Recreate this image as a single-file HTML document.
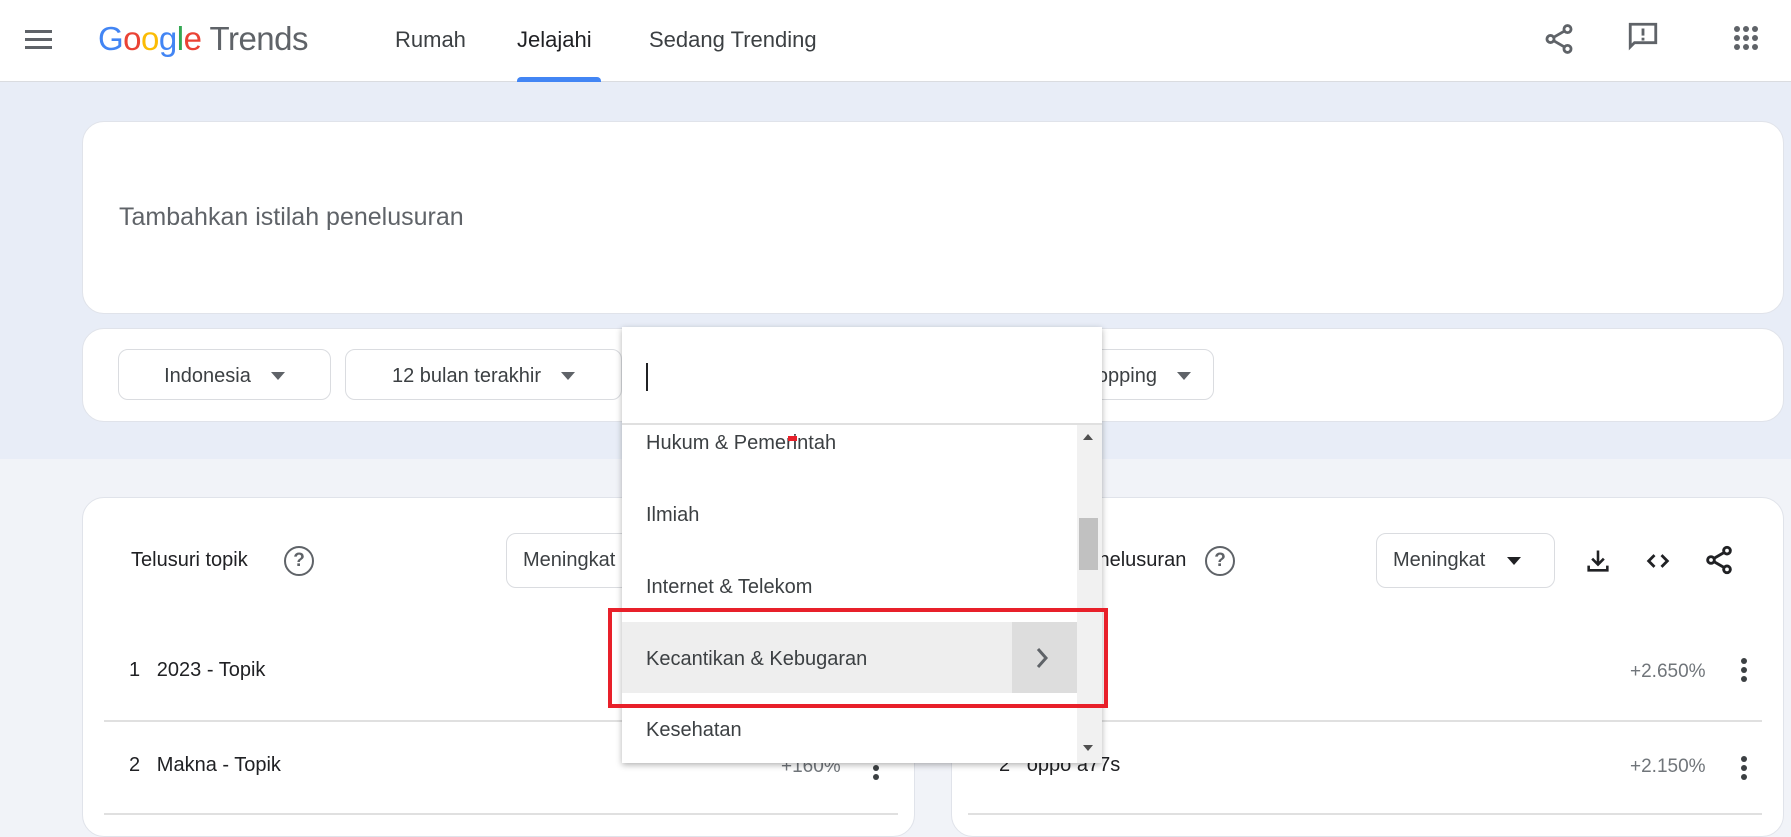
<!DOCTYPE html>
<html><head><meta charset="utf-8"><style>
*{box-sizing:border-box;margin:0;padding:0}
body{width:1791px;height:815px;overflow:hidden;background:#f1f3f8;font-family:"Liberation Sans",Arial,sans-serif;position:relative;color:#202124}
.abs{position:absolute}
.hdr{left:0;top:0;width:1791px;height:82px;background:#fff;border-bottom:1px solid #dadce0}
.band{left:0;top:82px;width:1791px;height:377px;background:#e8edf7}
.card{background:#fff;border-radius:22px;border:1px solid #e0e3ea}
.nav{top:27px;font-size:22px;color:#3c4043}
.btn{border:1px solid #dadce0;border-radius:10px;background:#fff;font-size:20px;color:#3c4043;display:flex;align-items:center;justify-content:center}
.tri{display:inline-block;width:0;height:0;border-left:7px solid transparent;border-right:7px solid transparent;border-top:8px solid #5f6368;margin-left:20px}
.item{left:646px;font-size:20px;color:#3c4043}
.row{font-size:20px;color:#202124}
.pct{font-size:19px;color:#70757a}
.dots{width:6px}
.dots i{display:block;width:6px;height:6px;border-radius:3px;background:#3c4043;margin-bottom:3px}
.div{height:2px;background:#e0e0e0}
</style></head><body>
<div class="abs hdr"></div>
<div class="abs" style="left:25px;top:30px;width:27px">
<div style="height:3px;background:#5f6368;margin-bottom:5px"></div><div style="height:3px;background:#5f6368;margin-bottom:5px"></div><div style="height:3px;background:#5f6368"></div></div>
<div class="abs" style="left:98px;top:20px;font-size:33px;letter-spacing:-0.5px"><span style="color:#4285f4">G</span><span style="color:#ea4335">o</span><span style="color:#fbbc05">o</span><span style="color:#4285f4">g</span><span style="color:#34a853">l</span><span style="color:#ea4335">e</span> <span style="color:#5f6368">Trends</span></div>
<div class="abs nav" style="left:395px">Rumah</div>
<div class="abs nav" style="left:517px;color:#202124">Jelajahi</div>
<div class="abs nav" style="left:649px">Sedang Trending</div>
<div class="abs" style="left:517px;top:77px;width:84px;height:5px;background:#4285f4;border-radius:4px 4px 0 0"></div>
<svg class="abs" style="left:1542px;top:22px" width="34" height="34" viewBox="0 0 24 24" fill="none" stroke="#5f6368" stroke-width="2"><circle cx="18" cy="5" r="2.5"/><circle cx="6" cy="12" r="2.5"/><circle cx="18" cy="19" r="2.5"/><path d="M8.2 10.8l7.6-4.4M8.2 13.2l7.6 4.4"/></svg>
<svg class="abs" style="left:1626px;top:20px" width="34" height="34" viewBox="0 0 24 24"><path d="M3 3h18v13H6l-3 3z" fill="none" stroke="#5f6368" stroke-width="2"/><rect x="11" y="6" width="2" height="5" fill="#5f6368"/><rect x="11" y="12.5" width="2" height="2" fill="#5f6368"/></svg>
<svg class="abs" style="left:1733px;top:25px" width="26" height="26" viewBox="0 0 26 26" fill="#5f6368"><circle cx="4" cy="4" r="3"/><circle cx="13" cy="4" r="3"/><circle cx="22" cy="4" r="3"/><circle cx="4" cy="13" r="3"/><circle cx="13" cy="13" r="3"/><circle cx="22" cy="13" r="3"/><circle cx="4" cy="22" r="3"/><circle cx="13" cy="22" r="3"/><circle cx="22" cy="22" r="3"/></svg>
<div class="abs band"></div>
<div class="abs card" style="left:82px;top:121px;width:1702px;height:193px"></div>
<div class="abs" style="left:119px;top:203px;font-size:25px;color:#5f6368">Tambahkan istilah penelusuran</div>
<div class="abs card" style="left:82px;top:328px;width:1702px;height:94px"></div>
<div class="abs btn" style="left:118px;top:349px;width:213px;height:51px;padding-top:3px">Indonesia<span class="tri"></span></div>
<div class="abs btn" style="left:345px;top:349px;width:277px;height:51px;padding-top:3px">12 bulan terakhir<span class="tri"></span></div>
<div class="abs btn" style="left:960px;top:349px;width:254px;height:51px;justify-content:flex-end;padding-right:22px;padding-top:3px">Shopping<span class="tri"></span></div>

<div class="abs card" style="left:82px;top:497px;width:833px;height:340px"></div>
<div class="abs card" style="left:951px;top:497px;width:833px;height:340px"></div>
<div class="abs" style="left:131px;top:549px;font-size:20px">Telusuri topik</div>
<div class="abs" style="left:284px;top:546px;width:30px;height:30px;border:2.5px solid #5f6368;border-radius:50%;text-align:center;font-size:19px;font-weight:bold;color:#5f6368;line-height:25px">?</div>
<div class="abs btn" style="left:506px;top:533px;width:180px;height:55px;justify-content:flex-start;padding-left:16px">Meningkat</div>
<div class="abs row" style="left:129px;top:659px">1&nbsp;&nbsp;&nbsp;2023 - Topik</div>
<div class="abs div" style="left:104px;top:720px;width:794px"></div>
<div class="abs row" style="left:129px;top:754px">2&nbsp;&nbsp;&nbsp;Makna - Topik</div>
<div class="abs pct" style="left:781px;top:756px">+160%</div>
<div class="abs dots" style="left:873px;top:756px"><i></i><i></i><i></i></div>

<div class="abs" style="left:1024px;top:549px;font-size:20px">Kueri penelusuran</div>
<div class="abs" style="left:1205px;top:546px;width:30px;height:30px;border:2.5px solid #5f6368;border-radius:50%;text-align:center;font-size:19px;font-weight:bold;color:#5f6368;line-height:25px">?</div>
<div class="abs btn" style="left:1376px;top:533px;width:179px;height:55px;justify-content:flex-start;padding-left:16px">Meningkat<span class="tri" style="border-top-color:#202124;margin-left:22px"></span></div>
<svg class="abs" style="left:1584px;top:547px" width="28" height="28" viewBox="0 0 24 24" fill="none" stroke="#202124" stroke-width="2.2"><path d="M12 3v11M7 10l5 5 5-5M4 16v4h16v-4"/></svg>
<svg class="abs" style="left:1643px;top:547px" width="30" height="28" viewBox="0 0 24 24" fill="none" stroke="#202124" stroke-width="2.4"><path d="M9 7l-5 5 5 5M15 7l5 5-5 5"/></svg>
<svg class="abs" style="left:1703px;top:544px" width="32" height="32" viewBox="0 0 24 24" fill="none" stroke="#202124" stroke-width="2.2"><circle cx="18" cy="5" r="2.5"/><circle cx="6" cy="12" r="2.5"/><circle cx="18" cy="19" r="2.5"/><path d="M8.2 10.8l7.6-4.4M8.2 13.2l7.6 4.4"/></svg>
<div class="abs row" style="left:999px;top:659px">1&nbsp;&nbsp;&nbsp;oppo a5</div>
<div class="abs pct" style="left:1630px;top:661px">+2.650%</div>
<div class="abs dots" style="left:1741px;top:658px"><i></i><i></i><i></i></div>
<div class="abs div" style="left:968px;top:720px;width:794px"></div>
<div class="abs row" style="left:999px;top:754px">2&nbsp;&nbsp;&nbsp;oppo a77s</div>
<div class="abs pct" style="left:1630px;top:756px">+2.150%</div>
<div class="abs dots" style="left:1741px;top:756px"><i></i><i></i><i></i></div>
<div class="abs div" style="left:104px;top:813px;width:794px"></div>
<div class="abs div" style="left:968px;top:813px;width:794px"></div>

<div class="abs" style="left:622px;top:327px;width:480px;height:436px;background:#fff;box-shadow:0 2px 6px rgba(0,0,0,.3)"></div>
<div class="abs" style="left:646px;top:363px;width:2px;height:28px;background:#202124"></div>
<div class="abs" style="left:622px;top:423px;width:480px;height:2px;background:#e0e0e0"></div>
<div class="abs item" style="top:432px">Hukum &amp; Pemerintah</div>
<div class="abs" style="left:788px;top:436px;width:9px;height:5px;background:#e8202a"></div>
<div class="abs item" style="top:504px">Ilmiah</div>
<div class="abs item" style="top:576px">Internet &amp; Telekom</div>
<div class="abs" style="left:622px;top:622px;width:455px;height:71px;background:#eeeeee"></div>
<div class="abs" style="left:1012px;top:622px;width:65px;height:71px;background:#dddddd"></div>
<svg class="abs" style="left:1034px;top:646px" width="16" height="24" viewBox="0 0 16 24" fill="none" stroke="#5f6368" stroke-width="3"><path d="M4 3l8 9-8 9"/></svg>
<div class="abs item" style="top:648px">Kecantikan &amp; Kebugaran</div>
<div class="abs item" style="top:719px">Kesehatan</div>
<div class="abs" style="left:1077px;top:425px;width:25px;height:338px;background:#f1f1f1"></div>
<div class="abs" style="left:1079px;top:518px;width:19px;height:52px;background:#c1c1c1"></div>
<div class="abs" style="left:1083px;top:434px;width:0;height:0;border-left:5px solid transparent;border-right:5px solid transparent;border-bottom:6px solid #505050"></div>
<div class="abs" style="left:1083px;top:745px;width:0;height:0;border-left:5px solid transparent;border-right:5px solid transparent;border-top:6px solid #505050"></div>
<div class="abs" style="left:608px;top:608px;width:500px;height:100px;border:4px solid #e8202a"></div>
</body></html>
